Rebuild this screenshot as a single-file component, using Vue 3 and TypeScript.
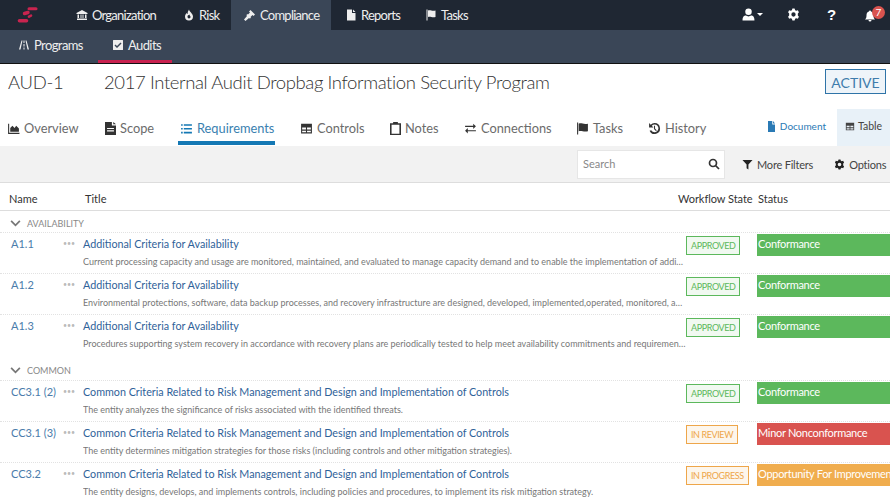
<script setup lang="ts">
interface Row {
  name: string
  title: string
  desc: string
  state: string
  stateClass: string
  status: string
  statusClass: string
}

interface Group {
  label: string
  rows: Row[]
}

const avail = 'Additional Criteria for Availability'
const common = 'Common Criteria Related to Risk Management and Design and Implementation of Controls'

const groups: Group[] = [
  {
    label: 'AVAILABILITY',
    rows: [
      { name: 'A1.1', title: avail, desc: 'Current processing capacity and usage are monitored, maintained, and evaluated to manage capacity demand and to enable the implementation of additional capacity to help meet availability commitments', state: 'APPROVED', stateClass: 'ok', status: 'Conformance', statusClass: 'green' },
      { name: 'A1.2', title: avail, desc: 'Environmental protections, software, data backup processes, and recovery infrastructure are designed, developed, implemented,operated, monitored, and maintained to meet availability commitments', state: 'APPROVED', stateClass: 'ok', status: 'Conformance', statusClass: 'green' },
      { name: 'A1.3', title: avail, desc: 'Procedures supporting system recovery in accordance with recovery plans are periodically tested to help meet availability commitments and requirements of the entity', state: 'APPROVED', stateClass: 'ok', status: 'Conformance', statusClass: 'green' },
    ],
  },
  {
    label: 'COMMON',
    rows: [
      { name: 'CC3.1 (2)', title: common, desc: 'The entity analyzes the significance of risks associated with the identified threats.', state: 'APPROVED', stateClass: 'ok', status: 'Conformance', statusClass: 'green' },
      { name: 'CC3.1 (3)', title: common, desc: 'The entity determines mitigation strategies for those risks (including controls and other mitigation strategies).', state: 'IN REVIEW', stateClass: 'warn', status: 'Minor Nonconformance', statusClass: 'red' },
      { name: 'CC3.2', title: common, desc: 'The entity designs, develops, and implements controls, including policies and procedures, to implement its risk mitigation strategy.', state: 'IN PROGRESS', stateClass: 'warn', status: 'Opportunity For Improvement', statusClass: 'orange' },
    ],
  },
]
</script>

<template>
  <div class="page">
    <header class="topbar">
      <svg class="logo outline" viewBox="0 0 22 16" stroke="#c8244f" stroke-linecap="round">
        <path stroke-width="3" d="M12 1.8h7" />
        <path stroke-width="3.4" d="M7.5 6.5 11 5.5" />
        <path stroke-width="2.6" d="M12 9.6l2-1" />
        <path stroke-width="3.6" d="M2.5 13.8h7" />
      </svg>
      <nav class="topnav">
        <a class="topitem" style="width: 107px">
          <svg viewBox="0 0 24 24"><path d="M12 2 1 8v2h22V8zM3 11h3v7H3zm6 0h2v7H9zm4 0h2v7h-2zm5 0h3v7h-3zM2 19h20v3H2z" /></svg>Organization
        </a>
        <a class="topitem" style="width: 53px">
          <svg viewBox="0 0 24 24"><path fill-rule="evenodd" d="M12 1c1 5 8 8 8 14a8 8 0 0 1-16 0c0-3 2-5 3-7 1 2 2 2 2 2 0-3 1-6 3-9zM9 15c0 2 1 4 3 4 2 0 3-2 3-3 0-2-2-3-2-5-2 1-4 2-4 4z" /></svg>Risk
        </a>
        <a class="topitem active" style="width: 100px">
          <svg viewBox="0 0 24 24"><path d="m13 2 9 9-3 3-2-2-4 4 1 2-3 1-1-1-7 6-3-3 6-7-1-1 1-3 2 1 4-4-2-2z" /></svg>Compliance
        </a>
        <a class="topitem wide" style="width: 80px">
          <svg viewBox="0 0 24 24"><path d="M4 1h10v7h7v15H4zM16 1l5 5h-5z" /></svg>Reports
        </a>
        <a class="topitem wide">
          <svg viewBox="0 0 24 24"><path d="M3 1h2v22H3zM6 3c5-2 8 2 15 0v13c-7 2-10-2-15 0z" /></svg>Tasks
        </a>
      </nav>
      <div class="tools">
        <span class="tool user">
          <svg viewBox="0 0 24 24"><circle cx="12" cy="7" r="6" /><path d="M1 23c0-7 3-9 6-9 3 2 7 2 10 0 3 0 6 2 6 9z" /></svg>
          <i class="caret"></i>
        </span>
        <svg class="tool gear" viewBox="0 0 24 24"><path fill-rule="evenodd" d="m10 1h4l1 3 2 1 3-1 2 4-2 2v4l2 2-2 4-3-1-2 1-1 3h-4l-1-3-2-1-3 1-2-4 2-2v-4L2 8l2-4 3 1 2-1zM12 8a4 4 0 1 0 0 8 4 4 0 0 0 0-8z" /></svg>
        <span class="tool help">?</span>
        <span class="tool bell">
          <svg viewBox="0 0 24 24"><path d="M12 1a2 2 0 0 1 2 2c4 1 5 4 5 8 0 4 1 6 3 8H2c2-2 3-4 3-8 0-4 1-7 5-8a2 2 0 0 1 2-2zM9 20h6a3 3 0 0 1-6 0z" /></svg>
          <b class="count">7</b>
        </span>
      </div>
    </header>

    <div class="subbar">
      <a class="subitem" style="width: 80px">
        <svg viewBox="0 0 24 24"><path d="M7 3h2L5 21H2zM15 3h2l5 18h-3zM11 3h2v5h-2zm0 7h2v5h-2zm0 7h2v4h-2z" /></svg>Programs
      </a>
      <a class="subitem current">
        <svg viewBox="0 0 24 24"><path fill-rule="evenodd" d="M3 2h18a1 1 0 0 1 1 1v18a1 1 0 0 1-1 1H3a1 1 0 0 1-1-1V3a1 1 0 0 1 1-1zm7 16 9-9-2-2-7 7-3-3-2 2z" /></svg>Audits
      </a>
    </div>

    <div class="heading">
      <span class="code">AUD-1</span>
      <h1>2017 Internal Audit Dropbag Information Security Program</h1>
      <span class="active-tag">ACTIVE</span>
    </div>

    <div class="tabs">
      <a class="tab" style="width: 98px"><svg viewBox="0 0 24 24"><path d="M2 3h2v17h19v2H2zM6 18v-7l4-4 4 4 3-4 5 5v6z" /></svg>Overview</a>
      <a class="tab narrow" style="width: 73px"><svg viewBox="4 1 16 22" preserveAspectRatio="none"><path fill-rule="evenodd" d="M4 1h10v6h6v16H4zM16 1l4 4h-4zM7 11v2h10v-2zm0 4v2h10v-2z" /></svg>Scope</a>
      <a class="tab current" style="width: 97px"><svg viewBox="0 0 24 24"><path d="M2 4h3v3H2zm5 0h15v3H7zM2 11h3v3H2zm5 0h15v3H7zM2 18h3v3H2zm5 0h15v3H7z" /></svg>Requirements</a>
      <a class="tab" style="margin-left: 25px; width: 90px"><svg viewBox="0 0 24 24"><path fill-rule="evenodd" d="M2 3h20v18H2zm2 7v4h7v-4zm9 0v4h7v-4zm-9 6v3h7v-3zm9 0v3h7v-3z" /></svg>Controls</a>
      <a class="tab narrow" style="width: 74px"><svg viewBox="5 1 14 23" preserveAspectRatio="none"><path fill-rule="evenodd" d="M9 1h6v2h4v21H5V3h4zM7 6v16h10V6z" /></svg>Notes</a>
      <a class="tab" style="width: 112px"><svg viewBox="0 0 24 24"><path d="M2 7h15V3l5 5-5 5V9H2zM22 15H7v-4l-5 5 5 5v-4h15z" /></svg>Connections</a>
      <a class="tab" style="width: 72px"><svg viewBox="0 0 24 24"><path d="M2 1h2v22H2zM5 3c5-2 9 2 17 0v14c-8 2-12-2-17 0z" /></svg>Tasks</a>
      <a class="tab"><svg viewBox="0 0 24 24"><path d="M12 2a10 10 0 1 1-9 14l3-1a7 7 0 1 0 1-8l3 3H2V2l3 3a10 10 0 0 1 7-3zm-1 5h2v5l3 3-1 2-4-4z" /></svg>History</a>
      <div class="views">
        <a class="view doc"><svg viewBox="3 1 18 22" preserveAspectRatio="none"><path d="M3 1h11v7h7v15H3zM16 1l5 5h-5z" /></svg>Document</a>
        <a class="view tbl"><svg viewBox="0 0 24 24"><path fill-rule="evenodd" d="M2 3h20v18H2zm2 7v4h7v-4zm9 0v4h7v-4zm-9 6v3h7v-3zm9 0v3h7v-3z" /></svg>Table</a>
      </div>
    </div>

    <div class="toolbar">
      <div class="search">
        <span>Search</span>
        <svg class="outline" viewBox="0 0 24 24" stroke="#333" stroke-width="3.4"><circle cx="10" cy="10" r="7" /><path d="m15 15 7 7" /></svg>
      </div>
      <a class="filter"><svg viewBox="0 0 24 24"><path d="M1 2h22l-9 10v11l-4-3v-8z" /></svg>More Filters</a>
      <a class="filter"><svg viewBox="0 0 24 24"><path fill-rule="evenodd" d="m10 1h4l1 3 2 1 3-1 2 4-2 2v4l2 2-2 4-3-1-2 1-1 3h-4l-1-3-2-1-3 1-2-4 2-2v-4L2 8l2-4 3 1 2-1zM12 8a4 4 0 1 0 0 8 4 4 0 0 0 0-8z" /></svg>Options</a>
    </div>

    <div class="thead">
      <span class="c-name">Name</span>
      <span class="c-title">Title</span>
      <span class="c-state">Workflow State</span>
      <span>Status</span>
    </div>

    <section v-for="g in groups" :key="g.label" class="group">
      <div class="group-label">
        <svg class="outline" viewBox="0 0 12 8" stroke="#777" stroke-width="2"><path d="m1 1 5 5 5-5" /></svg>
        {{ g.label }}
      </div>
      <div v-for="r in g.rows" :key="r.name" class="row">
        <div class="main">
          <div class="line1">
            <a class="r-name">{{ r.name }}</a>
            <span class="dots">•••</span>
            <a class="r-title">{{ r.title }}</a>
          </div>
          <p class="desc">{{ r.desc }}</p>
        </div>
        <div class="r-state"><span class="badge" :class="r.stateClass">{{ r.state }}</span></div>
        <div class="r-status" :class="r.statusClass">{{ r.status }}</div>
      </div>
    </section>
  </div>
</template>

<style scoped>
.page {
  width: 890px;
  height: 500px;
  overflow: hidden;
  background: #fff;
  font-family: Lato, "Open Sans", sans-serif;
  color: #444;
}

a {
  text-decoration: none;
}

svg {
  fill: currentColor;
  flex: none;
}

svg.outline {
  fill: none;
}

.topbar {
  height: 30px;
  background: #1f2733;
  display: flex;
  align-items: center;
  color: #fff;
}

.logo {
  width: 22px;
  height: 16px;
  margin-left: 17px;
  margin-right: 32px;
}

.topnav {
  display: flex;
  height: 100%;
}

.topitem {
  display: flex;
  align-items: center;
  gap: 4px;
  padding-left: 5px;
  box-sizing: border-box;
  font-size: 13px;
  letter-spacing: -0.75px;
  color: #eee;
}

.topitem svg {
  width: 12px;
  height: 12px;
}

.topitem.active {
  background: #3a4657;
  padding-left: 13px;
}

.topitem.wide {
  padding-left: 14px;
}

.tools {
  margin-left: auto;
  display: flex;
  align-items: center;
  padding-right: 5px;
  padding-bottom: 2px;
}

.tool {
  color: #fff;
}

.user {
  display: flex;
  align-items: center;
  gap: 2px;
}

.user svg {
  width: 13px;
  height: 13px;
}

.caret {
  border-top: 3px solid #fff;
  border-left: 3px solid transparent;
  border-right: 3px solid transparent;
}

.gear {
  width: 13px;
  height: 13px;
  margin-left: 24px;
}

.help {
  font: bold 15px "Liberation Sans", sans-serif;
  width: 10px;
  margin-left: 27px;
}

.bell {
  position: relative;
  width: 21px;
  height: 14px;
  margin-left: 27px;
}

.bell svg {
  width: 12px;
  height: 14px;
}

.count {
  position: absolute;
  left: 8px;
  top: -1px;
  width: 13px;
  height: 13px;
  border-radius: 50%;
  background: #d9534f;
  font-size: 10px;
  font-weight: 400;
  line-height: 13px;
  text-align: center;
}

.subbar {
  height: 33px;
  background: #3a4657;
  border-bottom: 1px solid #111;
  display: flex;
  padding-left: 18px;
  color: #fff;
}

.subitem {
  display: flex;
  align-items: center;
  gap: 4px;
  box-sizing: border-box;
  font-size: 13px;
  letter-spacing: -0.6px;
  color: #eee;
  height: 30px;
}

.subitem svg {
  width: 12px;
  height: 12px;
}

.subitem.current {
  width: 74px;
  height: 33px;
  padding-left: 14px;
  border-bottom: 3px solid #c8214f;
}

.heading {
  height: 45px;
  box-sizing: border-box;
  display: flex;
  align-items: center;
  padding: 0 4px 10px 8px;
}

.code {
  width: 96px;
  font-size: 18.5px;
  font-weight: 300;
  letter-spacing: -0.3px;
  color: #333;
}

h1 {
  margin: 0;
  font-size: 18.5px;
  font-weight: 300;
  letter-spacing: -0.39px;
  color: #333;
}

.active-tag {
  margin-left: auto;
  width: 61px;
  height: 25px;
  box-sizing: border-box;
  border: 1px solid #2f74a8;
  background: #eef4f9;
  color: #3f7cac;
  font-size: 14px;
  line-height: 25px;
  text-align: center;
}

.tabs {
  height: 37px;
  display: flex;
  align-items: stretch;
  padding-left: 7px;
}

.tab {
  display: flex;
  align-items: center;
  gap: 4px;
  box-sizing: border-box;
  font-size: 12.8px;
  color: #6b6b6b;
  padding-top: 1px;
}

.tab svg {
  width: 13px;
  height: 13px;
  color: #333;
}

.tab.narrow svg {
  width: 11px;
}

.tab.current {
  color: #3a7fb0;
  border-bottom: 4px solid #1478b4;
  margin-bottom: 1px;
  padding-top: 6px;
  padding-left: 2px;
}

.tab.current svg {
  color: #1478b4;
}

.views {
  margin-left: auto;
  display: flex;
  align-items: stretch;
}

.view {
  display: flex;
  align-items: center;
  gap: 5px;
  font-size: 10px;
  padding-bottom: 3px;
}

.view svg {
  width: 10px;
  height: 11px;
}

.doc {
  color: #2a7ab5;
  padding-right: 11px;
}

.doc svg {
  width: 7px;
}

.tbl {
  width: 53px;
  box-sizing: border-box;
  padding-left: 8px;
  gap: 3px;
  font-size: 10.5px;
  background: #e8f1f8;
  color: #444;
}

.toolbar {
  height: 37px;
  background: #f2f2f2;
  border-bottom: 1px solid #ddd;
  box-sizing: border-box;
  display: flex;
  align-items: center;
  padding-left: 577px;
}

.search {
  flex: none;
  width: 148px;
  height: 29px;
  box-sizing: border-box;
  background: #fff;
  border: 1px solid #e6e6e6;
  display: flex;
  align-items: center;
  justify-content: space-between;
  padding: 0 4px 1px 5px;
  font-size: 11px;
  color: #888;
  margin-right: 17px;
}

.search svg {
  width: 12px;
  height: 12px;
}

.filter {
  flex: none;
  display: flex;
  align-items: center;
  gap: 4px;
  font-size: 11px;
  letter-spacing: -0.2px;
  color: #444;
  margin-right: 21px;
  white-space: nowrap;
}

.filter:last-child {
  margin-right: 0;
}

.filter svg {
  width: 11px;
  height: 11px;
  color: #222;
}

.thead {
  height: 28px;
  border-bottom: 1px solid #ddd;
  box-sizing: border-box;
  display: flex;
  align-items: center;
  padding-left: 9px;
  font-size: 11px;
  color: #333;
  padding-top: 4px;
}

.c-name {
  width: 76px;
}

.c-title {
  width: 593px;
}

.c-state {
  width: 80px;
  letter-spacing: -0.05px;
}

.group-label {
  height: 22px;
  display: flex;
  align-items: center;
  gap: 6px;
  padding-left: 10px;
  padding-top: 4px;
  font-size: 9px;
  color: #888;
  border-bottom: 1px dotted #e2e2e2;
  box-sizing: border-box;
}

.group + .group .group-label {
  height: 25px;
  padding-top: 4px;
}

.group-label svg {
  width: 11px;
  height: 7px;
}

.row {
  height: 41px;
  box-sizing: border-box;
  display: flex;
  border-bottom: 1px dotted #e2e2e2;
}

.group:first-of-type .row:last-child {
  border-bottom: none;
}

.main {
  width: 686px;
  flex: none;
  overflow: hidden;
  padding-left: 11px;
  box-sizing: border-box;
}

.line1 {
  display: flex;
  align-items: center;
  height: 20px;
}

.r-name {
  width: 52px;
  font-size: 11px;
  color: #4a7cab;
}

.dots {
  width: 20px;
  font-size: 7px;
  color: #bbb;
}

.r-title {
  font-size: 10.75px;
  color: #2f6299;
}

.desc {
  margin: 2px 0 0 72px;
  font-size: 9px;
  color: #777;
  white-space: nowrap;
  overflow: hidden;
  text-overflow: ellipsis;
  line-height: 14px;
}

.r-state {
  width: 71px;
  flex: none;
  display: flex;
  align-items: flex-start;
  padding-top: 3px;
  box-sizing: border-box;
}

.badge {
  height: 19px;
  box-sizing: border-box;
  padding: 0 4px;
  border: 1px solid;
  font-size: 9px;
  letter-spacing: -0.4px;
  line-height: 17px;
  white-space: nowrap;
}

.badge.ok {
  color: #5cb85c;
  border-color: #5cb85c;
  background: #f1f9f1;
}

.badge.warn {
  color: #eea64a;
  border-color: #eea64a;
  background: #fdf6ec;
}

.r-status {
  flex: 1;
  height: 22px;
  margin-top: 1px;
  padding-left: 1px;
  font-size: 11px;
  letter-spacing: -0.3px;
  line-height: 20px;
  color: #fff;
  white-space: nowrap;
  overflow: hidden;
}

.green {
  background: #5cb85c;
}

.red {
  background: #d9534f;
}

.orange {
  background: #f0ad4e;
}
</style>
